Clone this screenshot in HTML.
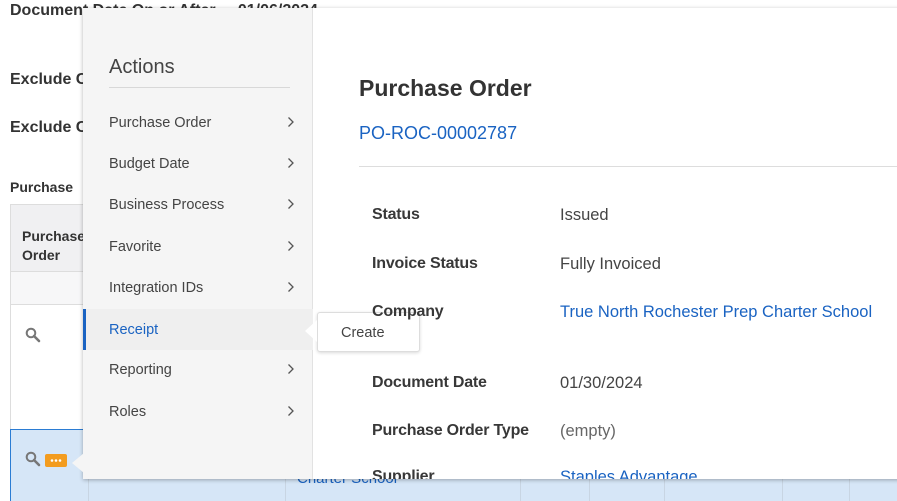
<!DOCTYPE html>
<html><head><style>
*{margin:0;padding:0;box-sizing:border-box}
body{width:897px;height:501px;overflow:hidden;position:relative;background:#fff;font-family:"Liberation Sans",sans-serif;color:#333}
.a{position:absolute;white-space:nowrap}
.bold{font-weight:bold}
.mi{position:absolute;left:0;width:230px;height:41px;font-size:14.5px;color:#444;padding-left:26px;line-height:43px}
.mi svg{position:absolute;left:204px;top:14px}
.lab{position:absolute;left:372px;font-size:16px;font-weight:bold;color:#383838;letter-spacing:-.2px}
.val{position:absolute;left:560px;font-size:16.5px;color:#444}
</style></head><body>
<div class="a bold" style="left:10px;top:2px;font-size:16px;color:#333">Document Date On or After&nbsp;&nbsp;&nbsp;&nbsp; 01/06/2024</div>
<div class="a bold" style="left:10px;top:71px;font-size:16px">Exclude C</div>
<div class="a bold" style="left:10px;top:119px;font-size:16px">Exclude C</div>
<div class="a bold" style="left:10px;top:179px;font-size:14px">Purchase</div>
<div class="a" style="left:10px;top:204px;width:887px;height:297px;border:1px solid #ddd"></div>
<div class="a" style="left:11px;top:205px;width:80px;height:67px;background:#f0f0f2;border-bottom:1px solid #ddd"></div>
<div class="a bold" style="left:22px;top:227px;font-size:14px;line-height:19px">Purchase<br>Order</div>
<div class="a" style="left:11px;top:272px;width:80px;height:33px;background:#f7f7f8;border-bottom:1px solid #ddd"></div>
<svg class="a" style="left:25px;top:327px" width="16" height="16" viewBox="0 0 16 16"><circle cx="6" cy="6" r="4.3" fill="none" stroke="#777" stroke-width="2"/><line x1="9" y1="9" x2="14" y2="14" stroke="#777" stroke-width="2.6" stroke-linecap="round"/></svg>
<div class="a" style="left:10px;top:429px;width:887px;height:72px;background:#d6e6f7;border-top:1px solid #2b7cd3;border-left:1px solid #2b7cd3"></div>
<div class="a" style="left:88px;top:430px;width:1px;height:71px;background:#c8d5e3"></div>
<div class="a" style="left:285px;top:430px;width:1px;height:71px;background:#c8d5e3"></div>
<div class="a" style="left:520px;top:430px;width:1px;height:71px;background:#c8d5e3"></div>
<div class="a" style="left:589px;top:430px;width:1px;height:71px;background:#c8d5e3"></div>
<div class="a" style="left:664px;top:430px;width:1px;height:71px;background:#c8d5e3"></div>
<div class="a" style="left:782px;top:430px;width:1px;height:71px;background:#c8d5e3"></div>
<div class="a" style="left:849px;top:430px;width:1px;height:71px;background:#c8d5e3"></div>
<div class="a" style="left:297px;top:470px;font-size:15px;color:#1a63c2">Charter School</div>
<svg class="a" style="left:25px;top:451px" width="16" height="16" viewBox="0 0 16 16"><circle cx="6" cy="6" r="4.3" fill="none" stroke="#777" stroke-width="2"/><line x1="9" y1="9" x2="14" y2="14" stroke="#777" stroke-width="2.6" stroke-linecap="round"/></svg>
<div class="a" style="left:45px;top:454px;width:22px;height:13px;background:#f39c1f;border-radius:2px"><svg width="22" height="13"><circle cx="7" cy="6.5" r="1.3" fill="#fff"/><circle cx="11" cy="6.5" r="1.3" fill="#fff"/><circle cx="15" cy="6.5" r="1.3" fill="#fff"/></svg></div>

<!-- popup -->
<div class="a" style="left:83px;top:8px;width:830px;height:471px;background:#fff;box-shadow:0 1px 4px rgba(0,0,0,.3)"></div>
<div class="a" style="left:72px;top:453px;width:0;height:0;border-top:10px solid transparent;border-bottom:10px solid transparent;border-right:12px solid #f5f5f5"></div>
<div class="a" style="left:83px;top:8px;width:230px;height:471px;background:#f5f5f5;border-right:1px solid #e2e2e2">
  <div class="a" style="left:26px;top:48px;font-size:20px;color:#444">Actions</div>
  <div class="a" style="left:26px;top:79px;width:181px;height:1px;background:#d8d8d8"></div>
  <div class="mi" style="top:94px">Purchase Order<svg width="8" height="12"><path d="M1.5 1.5 6 6 1.5 10.5" fill="none" stroke="#555" stroke-width="1.3"/></svg></div>
  <div class="mi" style="top:135px">Budget Date<svg width="8" height="12"><path d="M1.5 1.5 6 6 1.5 10.5" fill="none" stroke="#555" stroke-width="1.3"/></svg></div>
  <div class="mi" style="top:176px">Business Process<svg width="8" height="12"><path d="M1.5 1.5 6 6 1.5 10.5" fill="none" stroke="#555" stroke-width="1.3"/></svg></div>
  <div class="mi" style="top:218px">Favorite<svg width="8" height="12"><path d="M1.5 1.5 6 6 1.5 10.5" fill="none" stroke="#555" stroke-width="1.3"/></svg></div>
  <div class="mi" style="top:259px">Integration IDs<svg width="8" height="12"><path d="M1.5 1.5 6 6 1.5 10.5" fill="none" stroke="#555" stroke-width="1.3"/></svg></div>
  <div class="mi" style="top:301px;background:#efefef;color:#1a63c2;border-left:3px solid #1a63c2;padding-left:23px">Receipt</div>
  <div class="mi" style="top:341px">Reporting<svg width="8" height="12"><path d="M1.5 1.5 6 6 1.5 10.5" fill="none" stroke="#555" stroke-width="1.3"/></svg></div>
  <div class="mi" style="top:383px">Roles<svg width="8" height="12"><path d="M1.5 1.5 6 6 1.5 10.5" fill="none" stroke="#555" stroke-width="1.3"/></svg></div>
</div>
<div class="a" style="left:317px;top:312px;width:103px;height:40px;background:#fff;border:1px solid #ddd;border-radius:3px;box-shadow:0 1px 3px rgba(0,0,0,.15);font-size:14.5px;color:#444;line-height:40px;padding-left:23px">Create</div>
<div class="a" style="left:305px;top:320px;width:0;height:0;border-top:11px solid transparent;border-bottom:11px solid transparent;border-right:12px solid #fff"></div>

<div class="a bold" style="left:359px;top:75px;font-size:23px;color:#333">Purchase Order</div>
<div class="a" style="left:359px;top:123px;font-size:18px;color:#1a63c2">PO-ROC-00002787</div>
<div class="a" style="left:359px;top:166px;width:538px;height:1px;background:#ddd"></div>
<div class="lab" style="top:206px">Status</div><div class="val" style="top:206px">Issued</div>
<div class="lab" style="top:255px">Invoice Status</div><div class="val" style="top:255px">Fully Invoiced</div>
<div class="lab" style="top:303px">Company</div><div class="val" style="top:303px;color:#1a63c2">True North Rochester Prep Charter School</div>
<div class="lab" style="top:374px">Document Date</div><div class="val" style="top:374px">01/30/2024</div>
<div class="lab" style="top:422px">Purchase Order Type</div><div class="val" style="top:422px;color:#666">(empty)</div>
<div class="a" style="left:313px;top:461px;width:584px;height:18px;overflow:hidden">
<div class="lab" style="left:59px;top:7px">Supplier</div><div class="val" style="left:247px;top:7px;color:#1a63c2">Staples Advantage</div></div>
</body></html>
